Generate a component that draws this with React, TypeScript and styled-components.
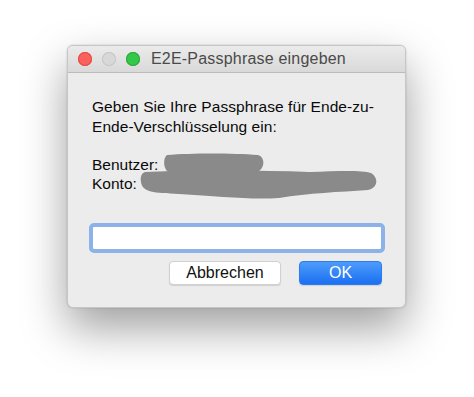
import React from 'react';
import styled, { createGlobalStyle } from 'styled-components';

const GlobalStyle = createGlobalStyle`
  html, body {
    margin: 0;
    padding: 0;
    background: #ffffff;
    font-family: 'Liberation Sans', Arial, sans-serif;
  }
`;

const Stage = styled.div`
  width: 474px;
  height: 397px;
  padding: 45px 0 0 67px;
  box-sizing: border-box;
`;

const Window = styled.div`
  width: 339px;
  height: 263px;
  background: #ececec;
  border-radius: 6px;
  border: 1px solid #c6c6c6;
  box-sizing: border-box;
  box-shadow: 0 20px 45px rgba(0, 0, 0, 0.38), 0 0 2px rgba(0, 0, 0, 0.2);
  overflow: hidden;
  display: flex;
  flex-direction: column;
`;

const TitleBar = styled.div`
  height: 27px;
  flex-shrink: 0;
  display: flex;
  align-items: center;
  padding-left: 10px;
  background: linear-gradient(#ebebeb, #d9d9d9);
  border-bottom: 1px solid #bcbcbc;
  box-sizing: border-box;
`;

const Lights = styled.div`
  display: flex;
  gap: 10px;
  margin-right: 11px;
`;

const Light = styled.span<{ $color: string; $edge: string }>`
  width: 14px;
  height: 14px;
  border-radius: 50%;
  background: ${(p) => p.$color};
  box-shadow: inset 0 0 0 1px ${(p) => p.$edge};
`;

const Title = styled.div`
  font-size: 16px;
  color: #4a4a4a;
  letter-spacing: 0.2px;
`;

const Content = styled.div`
  flex: 1;
  padding: 24px 23px 0 24px;
  display: flex;
  flex-direction: column;
`;

const Message = styled.p`
  margin: 0;
  font-size: 15.5px;
  line-height: 20px;
  color: #0a0a0a;
  letter-spacing: 0.05px;
`;

const Info = styled.div`
  margin-top: 18px;
  font-size: 15.5px;
  line-height: 19px;
  color: #0a0a0a;
`;

const InfoRow = styled.div`
  display: flex;
  align-items: center;
  position: relative;
`;

const Scribble = styled.svg`
  position: absolute;
  pointer-events: none;
`;

const Field = styled.input`
  margin: 30px 0 0 -3px;
  width: 296px;
  height: 30px;
  box-sizing: border-box;
  border: 4px solid #8db2ea;
  border-radius: 5px;
  background: #ffffff;
  outline: none;
`;

const Buttons = styled.div`
  display: flex;
  justify-content: flex-end;
  gap: 18px;
  margin: 8px 0 0 0;
`;

const Button = styled.button<{ $primary?: boolean }>`
  height: 24px;
  width: ${(p) => (p.$primary ? '83px' : '112px')};
  border-radius: 4px;
  font-family: 'Liberation Sans', Arial, sans-serif;
  font-size: 16px;
  padding: 0;
  cursor: pointer;
  color: ${(p) => (p.$primary ? '#ffffff' : '#111111')};
  background: ${(p) =>
    p.$primary ? 'linear-gradient(#4d9cfb, #1b6ff1)' : '#ffffff'};
  border: 1px solid ${(p) => (p.$primary ? '#2b7cf0' : '#d0d0d0')};
  box-shadow: 0 1px 1px rgba(0, 0, 0, 0.12);
`;

const App: React.FC = () => (
  <>
    <GlobalStyle />
    <Stage>
      <Window>
        <TitleBar>
          <Lights>
            <Light $color="#fc605c" $edge="#de4a45" />
            <Light $color="#d8d8d8" $edge="#c6c6c6" />
            <Light $color="#34c84a" $edge="#2aa83c" />
          </Lights>
          <Title>E2E-Passphrase eingeben</Title>
        </TitleBar>
        <Content>
          <Message>
            Geben Sie Ihre Passphrase für Ende-zu-
            <br />
            Ende-Verschlüsselung ein:
          </Message>
          <Info>
            <InfoRow>
              Benutzer:
              <Scribble
                width="104"
                height="22"
                viewBox="0 0 104 22"
                style={{ left: 70, top: -3 }}
              >
                <path
                  d="M5 3 C30 1 70 1 96 3 C103 5 103 15 97 19 L6 20 C1 16 1 6 5 3 Z"
                  fill="#8a8a8a"
                />
              </Scribble>
            </InfoRow>
            <InfoRow>
              Konto:
              <Scribble
                width="240"
                height="32"
                viewBox="0 0 240 32"
                style={{ left: 47, top: -5 }}
              >
                <path
                  d="M6 3 C60 1 120 1 170 3 C200 2 222 1 232 4 C240 9 239 19 229 21 C200 23 170 24 140 29 C110 31 80 27 40 25 C15 24 3 23 2 13 C1 7 3 4 6 3 Z"
                  fill="#8a8a8a"
                />
              </Scribble>
            </InfoRow>
          </Info>
          <Field type="password" />
          <Buttons>
            <Button>Abbrechen</Button>
            <Button $primary>OK</Button>
          </Buttons>
        </Content>
      </Window>
    </Stage>
  </>
);

export default App;
